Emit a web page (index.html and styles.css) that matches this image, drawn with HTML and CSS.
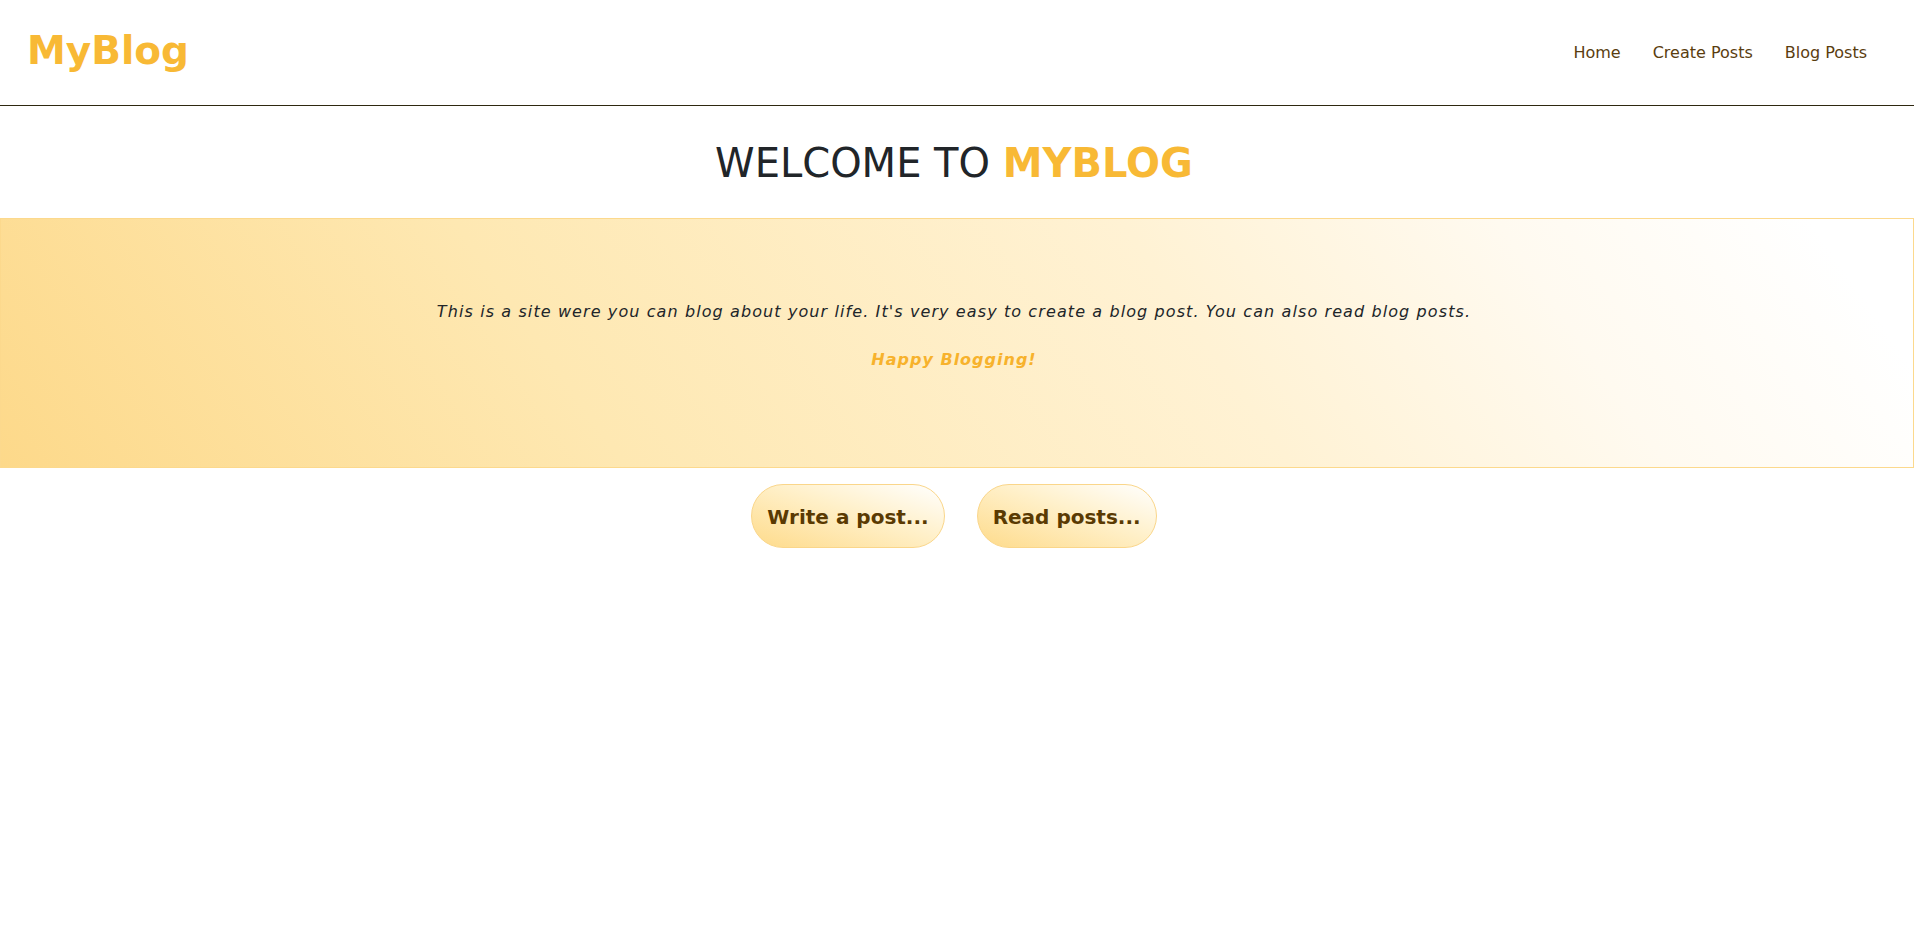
FILE: index.html
```html
<!DOCTYPE html>
<html lang="en">
<head>
<meta charset="utf-8">
<title>MyBlog</title>
<link rel="stylesheet" href="styles.css">
</head>
<body>
<header class="site-header">
  <a class="logo" href="#">MyBlog</a>
  <nav class="nav">
    <a href="#">Home</a>
    <a href="#">Create Posts</a>
    <a href="#">Blog Posts</a>
  </nav>
</header>
<main>
  <h1 class="welcome">WELCOME TO <span class="brand">MYBLOG</span></h1>
  <section class="banner">
    <p class="intro">This is a site were you can blog about your life. It's very easy to create a blog post. You can also read blog posts.</p>
    <p class="happy">Happy Blogging!</p>
  </section>
  <div class="actions">
    <a class="pill" href="#">Write a post...</a>
    <a class="pill" href="#">Read posts...</a>
  </div>
</main>
</body>
</html>
```

FILE: styles.css
```css
* { box-sizing: border-box; }
html, body { margin: 0; padding: 0; background: #ffffff; }
body {
  font-family: "DejaVu Sans", Verdana, sans-serif;
  color: #212529;
}
a { text-decoration: none; }

.site-header {
  height: 106px;
  display: flex;
  align-items: center;
  justify-content: space-between;
  padding: 0 47px 0 27px;
  border-bottom: 1px solid #2e2810;
}
.logo {
  font-size: 39px;
  font-weight: bold;
  color: #f8b935;
  padding-bottom: 5px;
}
.nav {
  display: flex;
  gap: 32px;
  padding-bottom: 1px;
}
.nav a {
  font-size: 16px;
  color: #5a3d0f;
}

.welcome {
  margin: 34px 0 32px;
  padding-right: 6px;
  text-align: center;
  font-size: 40px;
  font-weight: normal;
  line-height: normal;
  color: #212529;
}
.brand {
  font-weight: bold;
  color: #f8b935;
}

.banner {
  height: 250px;
  padding: 83px 6px 0 0;
  border: 1px solid #fcd98d;
  background: linear-gradient(55deg, #fdd98a 0%, #fee8b2 30%, #fff2d4 62%, #fffaf0 80%, #ffffff 95%);
  text-align: center;
}
.banner p { margin: 0; line-height: normal; }
.intro {
  font-size: 16px;
  font-style: italic;
  letter-spacing: 1.1px;
  color: #212529;
}
.happy {
  margin-top: 29px !important;
  font-size: 16px;
  font-style: italic;
  font-weight: bold;
  letter-spacing: 1px;
  color: #f7b22c;
}

.actions {
  display: flex;
  justify-content: center;
  gap: 32px;
  margin-top: 16px;
  padding-right: 6px;
}
.pill {
  display: block;
  padding: 20px 15px 18px;
  border: 1px solid #fad68a;
  border-radius: 32px;
  background: linear-gradient(to top right, #fedb8b 0%, #fff0c9 55%, #ffffff 100%);
  font-size: 20px;
  font-weight: bold;
  line-height: normal;
  color: #5a3a02;
}
```
